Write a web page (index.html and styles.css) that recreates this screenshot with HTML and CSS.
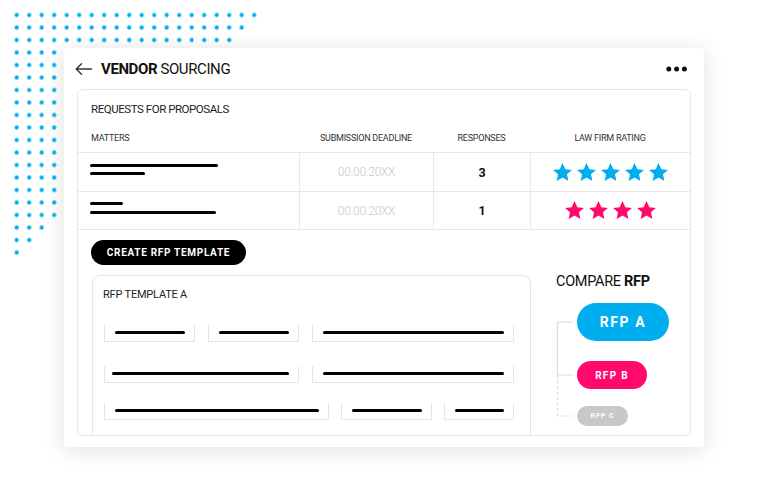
FILE: index.html
```html
<!DOCTYPE html>
<html>
<head>
<meta charset="utf-8">
<link rel="stylesheet" href="styles.css">
</head>
<body>
<svg class="dots" width="280" height="280" viewBox="0 0 280 280">
  <defs>
    <pattern id="dotp" patternUnits="userSpaceOnUse" x="10.45" y="8.75" width="12.5" height="12.5">
      <circle cx="6.25" cy="6.25" r="2.1" fill="#00aeef"/>
    </pattern>
  </defs>
  <polygon points="10,8 267,8 10,265" fill="url(#dotp)"/>
</svg>
<div class="card">
  <header class="head">
    <svg class="back" width="17" height="12" viewBox="0 0 17 12"><path d="M16.5 6H1.2M6.5 0.8L1.2 6l5.3 5.2" fill="none" stroke="#333" stroke-width="1.4" stroke-linecap="round" stroke-linejoin="round"/></svg>
    <h1 class="title"><b>VENDOR</b> SOURCING</h1>
    <svg class="more" width="22" height="6" viewBox="0 0 22 6"><circle cx="2.8" cy="3" r="2.5" fill="#111"/><circle cx="10.6" cy="3" r="2.5" fill="#111"/><circle cx="18.4" cy="3" r="2.5" fill="#111"/></svg>
  </header>
  <section class="panel">
    <h2 class="ptitle">REQUESTS FOR PROPOSALS</h2>
    <div class="row thead">
      <div class="th left">MATTERS</div>
      <div class="th">SUBMISSION DEADLINE</div>
      <div class="th">RESPONSES</div>
      <div class="th">LAW FIRM RATING</div>
    </div>
    <div class="row data r1">
      <div class="cell matters"><span class="bar" style="width:128px"></span><span class="bar" style="width:55px"></span></div>
      <div class="cell date">00.00.20XX</div>
      <div class="cell num">3</div>
      <div class="cell stars blue">
        <svg viewBox="0 0 24 24"><path d="M12 1.2l3.2 7 7.6.8-5.7 5.1 1.6 7.6L12 17.8l-6.7 3.9 1.6-7.6L1.2 9l7.6-.8z"/></svg>
        <svg viewBox="0 0 24 24"><path d="M12 1.2l3.2 7 7.6.8-5.7 5.1 1.6 7.6L12 17.8l-6.7 3.9 1.6-7.6L1.2 9l7.6-.8z"/></svg>
        <svg viewBox="0 0 24 24"><path d="M12 1.2l3.2 7 7.6.8-5.7 5.1 1.6 7.6L12 17.8l-6.7 3.9 1.6-7.6L1.2 9l7.6-.8z"/></svg>
        <svg viewBox="0 0 24 24"><path d="M12 1.2l3.2 7 7.6.8-5.7 5.1 1.6 7.6L12 17.8l-6.7 3.9 1.6-7.6L1.2 9l7.6-.8z"/></svg>
        <svg viewBox="0 0 24 24"><path d="M12 1.2l3.2 7 7.6.8-5.7 5.1 1.6 7.6L12 17.8l-6.7 3.9 1.6-7.6L1.2 9l7.6-.8z"/></svg>
      </div>
    </div>
    <div class="row data r2">
      <div class="cell matters"><span class="bar" style="width:33px"></span><span class="bar" style="width:126px"></span></div>
      <div class="cell date">00.00.20XX</div>
      <div class="cell num">1</div>
      <div class="cell stars pink">
        <svg viewBox="0 0 24 24"><path d="M12 1.2l3.2 7 7.6.8-5.7 5.1 1.6 7.6L12 17.8l-6.7 3.9 1.6-7.6L1.2 9l7.6-.8z"/></svg>
        <svg viewBox="0 0 24 24"><path d="M12 1.2l3.2 7 7.6.8-5.7 5.1 1.6 7.6L12 17.8l-6.7 3.9 1.6-7.6L1.2 9l7.6-.8z"/></svg>
        <svg viewBox="0 0 24 24"><path d="M12 1.2l3.2 7 7.6.8-5.7 5.1 1.6 7.6L12 17.8l-6.7 3.9 1.6-7.6L1.2 9l7.6-.8z"/></svg>
        <svg viewBox="0 0 24 24"><path d="M12 1.2l3.2 7 7.6.8-5.7 5.1 1.6 7.6L12 17.8l-6.7 3.9 1.6-7.6L1.2 9l7.6-.8z"/></svg>
      </div>
    </div>
    <button class="create">CREATE RFP TEMPLATE</button>
    <div class="lower">
      <div class="template">
        <div class="ttitle">RFP TEMPLATE A</div>
        <div class="frow fr1">
          <div class="field w91"><span class="bar"></span></div>
          <div class="field w91"><span class="bar"></span></div>
          <div class="field grow"><span class="bar"></span></div>
        </div>
        <div class="frow fr2">
          <div class="field w195 tight"><span class="bar"></span></div>
          <div class="field grow"><span class="bar"></span></div>
        </div>
        <div class="frow fr3">
          <div class="field w225"><span class="bar"></span></div>
          <div class="field w91"><span class="bar"></span></div>
          <div class="field grow"><span class="bar"></span></div>
        </div>
      </div>
      <div class="compare">
        <div class="ctitle">COMPARE <b>RFP</b></div>
        <div class="tree">
          <svg class="links" width="21" height="124" viewBox="0 0 21 124">
            <path d="M1.5 19V72M1.5 19H17M1.5 72H17" stroke="#dcdcdc" stroke-width="1.2" fill="none"/>
            <path d="M1.5 72V113H17" stroke="#dcdcdc" stroke-width="1.2" fill="none" stroke-dasharray="3 2.5"/>
          </svg>
          <div class="pills">
            <span class="pill pa">RFP A</span>
            <span class="pill pb">RFP B</span>
            <span class="pill pc">RFP C</span>
          </div>
        </div>
      </div>
    </div>
  </section>
</div>
</body>
</html>
```
FILE: styles.css
```css
* { box-sizing: border-box; }
html, body {
  margin: 0;
  padding: 0;
  width: 768px;
  height: 496px;
  background: #fff;
  overflow: hidden;
}
body {
  position: relative;
  font-family: "Roboto", "Liberation Sans", sans-serif;
  color: #222;
  padding-top: 48px;
  padding-left: 64px;
}
.dots {
  position: absolute;
  left: 0;
  top: 0;
  z-index: 0;
}
.card {
  position: relative;
  z-index: 1;
  width: 640px;
  height: 399px;
  background: #fff;
  border-radius: 4px;
  box-shadow: 0 3px 22px rgba(0, 0, 0, 0.13);
  display: flex;
  flex-direction: column;
}
.head {
  height: 41px;
  display: flex;
  align-items: center;
  padding: 0 16px 0 11px;
}
.back { display: block; margin-top: 1px; }
.title {
  margin: 0 0 0 9px;
  font-size: 15px;
  font-weight: 400;
  letter-spacing: -0.4px;
  color: #111;
  line-height: 20px;
  flex: 1;
}
.title b { font-weight: 700; }
.more { display: block; }
.panel {
  margin: 0 13px;
  height: 347px;
  border: 1px solid #e8e8e8;
  border-radius: 6px;
  overflow: hidden;
  display: flex;
  flex-direction: column;
}
.ptitle {
  margin: 0;
  padding: 12px 0 0 13px;
  font-size: 11.5px;
  font-weight: 400;
  letter-spacing: -0.45px;
  line-height: 14px;
  color: #222;
}
.row {
  display: grid;
  grid-template-columns: 221px 134px 97px 1fr;
}
.thead {
  height: 36px;
  padding-top: 15px;
}
.th {
  font-size: 9px;
  letter-spacing: -0.25px;
  line-height: 14px;
  text-align: center;
  color: #333;
}
.th.left { text-align: left; padding-left: 13px; }
.data { border-top: 1px solid #e8e8e8; }
.r1 { height: 39px; }
.r2 { height: 39px; border-bottom: 1px solid #e8e8e8; }
.cell {
  display: flex;
  align-items: center;
  justify-content: center;
  border-left: 1px solid #e8e8e8;
}
.cell.matters {
  border-left: 0;
  flex-direction: column;
  align-items: flex-start;
  justify-content: flex-start;
  padding: 11px 0 0 12px;
  gap: 5px;
}
.r2 .cell.matters { padding-top: 10px; gap: 6px; }
.bar {
  display: block;
  height: 3px;
  border-radius: 2px;
  background: #000;
}
.date {
  font-size: 12px;
  letter-spacing: -0.3px;
  font-weight: 300;
  color: #c8c8c8;
}
.num {
  font-size: 12.5px;
  font-weight: 700;
  color: #111;
}
.stars { gap: 3px; }
.stars svg { width: 21px; height: 21px; display: block; }
.blue svg { fill: #00aeef; }
.pink svg { fill: #ff0a6c; }
.create {
  align-self: flex-start;
  margin: 10px 0 0 13px;
  height: 25px;
  width: 155px;
  padding: 0;
  border: 0;
  border-radius: 13px;
  background: #000;
  color: #fff;
  font-family: "Roboto", "Liberation Sans", sans-serif;
  font-size: 10px;
  font-weight: 700;
  letter-spacing: 0.7px;
}
.lower {
  flex: 1;
  display: flex;
  margin-top: 10px;
  padding-left: 14px;
}
.template {
  width: 439px;
  border: 1px solid #e5e5e5;
  border-bottom: 0;
  border-radius: 8px 8px 0 0;
  display: flex;
  flex-direction: column;
}
.ttitle {
  padding: 12px 0 0 10px;
  font-size: 11px;
  letter-spacing: -0.2px;
  line-height: 14px;
  color: #222;
}
.frow {
  display: flex;
  gap: 13px;
  margin-left: 11px;
  width: 410px;
}
.fr1 { margin-top: 23px; }
.fr2 { margin-top: 24px; }
.fr3 { margin-top: 20px; gap: 12px; }
.field {
  height: 17px;
  border: 1px solid #e6e6e6;
  border-top: 0;
  padding: 6px 9px 0 10px;
}
.field.tight { padding-left: 7px; }
.w91 { width: 91px; }
.w195 { width: 195px; }
.w225 { width: 225px; }
.grow { flex: 1; }
.compare {
  flex: 1;
  padding-left: 25px;
}
.ctitle {
  font-size: 14.5px;
  letter-spacing: -0.3px;
  line-height: 14px;
  color: #111;
}
.ctitle b { font-weight: 700; }
.tree {
  display: flex;
  margin-top: 14px;
}
.links { display: block; }
.pills {
  display: flex;
  flex-direction: column;
  align-items: flex-start;
}
.pill {
  display: flex;
  align-items: center;
  justify-content: center;
  color: #fff;
  font-weight: 700;
}
.pa {
  width: 92px;
  height: 38px;
  border-radius: 19px;
  background: #00aeef;
  font-size: 14px;
  letter-spacing: 1.6px;
}
.pb {
  margin-top: 20px;
  width: 70px;
  height: 28px;
  border-radius: 14px;
  background: #ff0a6c;
  font-size: 10px;
  letter-spacing: 1.3px;
}
.pc {
  margin-top: 17px;
  width: 51px;
  height: 20px;
  border-radius: 10px;
  background: #c8c8c8;
  font-size: 7px;
  letter-spacing: 1px;
}
```
